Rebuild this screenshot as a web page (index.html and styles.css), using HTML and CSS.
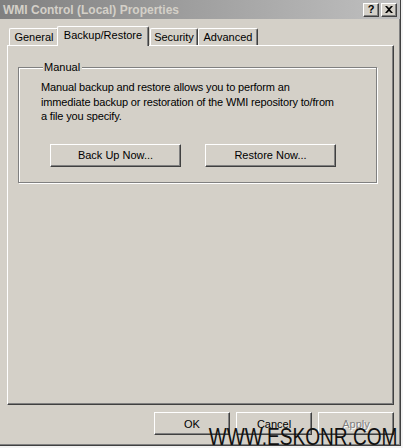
FILE: index.html
```html
<!DOCTYPE html>
<html lang="en">
<head>
  <meta charset="UTF-8" />
  <title>WMI Control (Local) Properties</title>
  <link rel="stylesheet" href="styles.css">
</head>
<body>
  <div class="window">
    <!-- Title bar -->
    <div class="titlebar">
      <span class="title">WMI Control (Local) Properties</span>
      <div class="caption-buttons">
        <span class="cap-btn">?</span>
        <span class="cap-btn close">
          <svg width="8" height="7" viewBox="0 0 8 7"><path d="M0 0h2l2 2 2-2h2L5 3.5 8 7H6L4 5 2 7H0l3-3.5z" fill="#000"/></svg>
        </span>
      </div>
    </div>

    <div class="content">
      <!-- Tabs -->
      <div class="tabs">
        <div class="tab t-general">General</div>
        <div class="tab t-backup selected">Backup/Restore</div>
        <div class="tab t-security">Security</div>
        <div class="tab t-advanced">Advanced</div>
      </div>

      <div class="tab-panel">
        <fieldset class="group">
          <legend>Manual</legend>
          <p class="desc">Manual backup and restore allows you to perform an<br>immediate backup or restoration of the WMI repository to/from<br>a file you specify.</p>
          <div class="group-buttons">
            <button class="btn wide">Back Up Now...</button>
            <button class="btn wide">Restore Now...</button>
          </div>
        </fieldset>
      </div>

      <div class="dialog-buttons">
        <button class="btn">OK</button>
        <button class="btn">Cancel</button>
        <button class="btn" disabled>Apply</button>
      </div>
    </div>

    <div class="watermark">WWW.ESKONR.COM</div>
  </div>
</body>
</html>
```

FILE: styles.css
```css
/* Global */
* {
  box-sizing: border-box;
}
body {
  margin: 0;
  background: #f4f4f4;
  font-family: "Liberation Sans", Arial, sans-serif;
  font-size: 11px;
  color: #000;
}

/* Window frame */
.window {
  position: relative;
  width: 401px;
  height: 446px;
  background: #d4d0c8;
  border-right: 1px solid #404040;
  border-bottom: 1px solid #404040;
  box-shadow: inset -1px -1px #808080;
}

/* Title bar (inactive) */
.titlebar {
  height: 19px;
  display: flex;
  align-items: center;
  justify-content: space-between;
  background: linear-gradient(90deg, #808080, #c0c0c0);
}
.title {
  margin-left: 3px;
  font-weight: bold;
  font-size: 12px;
  color: #d4d0c8;
}
.caption-buttons {
  display: flex;
  gap: 2px;
  margin-right: 3px;
}
.cap-btn {
  width: 16px;
  height: 14px;
  display: flex;
  align-items: center;
  justify-content: center;
  background: #d4d0c8;
  border: 1px solid;
  border-color: #fff #404040 #404040 #fff;
  box-shadow: inset -1px -1px #808080;
  font-weight: bold;
  font-size: 11px;
  line-height: 1;
}

/* Content */
.content {
  padding: 7px 6px 0 7px;
}

/* Tabs */
.tabs {
  display: flex;
  align-items: flex-end;
  padding-left: 2px;
  height: 19px;
}
.tab {
  position: relative;
  height: 17px;
  text-align: center;
  line-height: 17px;
  border-top: 1px solid #fff;
  border-left: 1px solid #fff;
  border-right: 1px solid #404040;
  box-shadow: inset -1px 0 #808080;
  border-radius: 2px 2px 0 0;
}
.t-general { width: 50px; }
.t-backup { width: 92px; }
.t-security { width: 48px; }
.t-advanced { width: 60px; }
.tab.selected {
  height: 20px;
  margin: 0 -2px -1px;
  line-height: 17px;
  background: #d4d0c8;
  z-index: 1;
}
.tab.selected + .tab {
  margin-left: 3px;
}

.tab-panel {
  height: 360px;
  border: 1px solid;
  border-color: #fff #404040 #404040 #fff;
  box-shadow: inset -1px -1px #808080;
  padding: 15px 16px 0 10px;
}

/* Group box */
.group {
  margin: 0;
  padding: 0 0 15px 22px;
  border: 1px solid #808080;
  box-shadow: inset 1px 1px #fff, 1px 1px #fff;
}
.group legend {
  margin-left: 2px;
  padding: 0 2px 0 1px;
  background: #d4d0c8;
  line-height: 13px;
}
.desc {
  margin: 6px 0 0;
  line-height: 14.5px;
  letter-spacing: -0.15px;
}
.group-buttons {
  display: flex;
  gap: 24px;
  margin: 20px 0 0 9px;
}

/* Buttons */
.btn {
  width: 76px;
  height: 23px;
  padding: 0;
  font-family: inherit;
  font-size: 11px;
  color: #000;
  background: #d4d0c8;
  border: 1px solid;
  border-color: #fff #404040 #404040 #fff;
  box-shadow: inset -1px -1px #808080;
  border-radius: 0;
}
.btn.wide {
  width: 131px;
}
.btn:disabled {
  color: #808080;
  text-shadow: 1px 1px #fff;
}

.dialog-buttons {
  display: flex;
  justify-content: flex-end;
  gap: 6px;
  margin-top: 7px;
}

/* Watermark overlay */
.watermark {
  position: absolute;
  right: 3px;
  bottom: -2px;
  font-size: 23px;
  line-height: 20px;
  color: #111;
  white-space: nowrap;
  transform: scaleX(0.83);
  transform-origin: right bottom;
}
```
